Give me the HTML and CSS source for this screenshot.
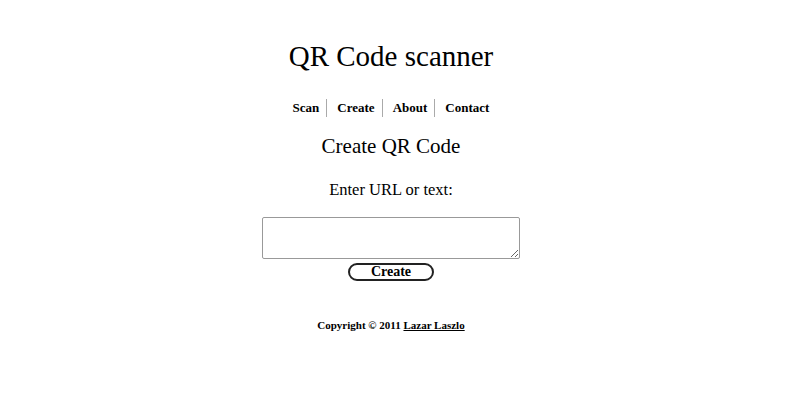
FILE: index.html
```html
<!DOCTYPE html>
<html>
<head>
<meta charset="utf-8">
<title>QR Code scanner</title>
<link rel="stylesheet" href="styles.css">
</head>
<body>
<div class="page">
  <h1 class="title">QR Code scanner</h1>
  <nav class="nav">
    <a class="nav-item first" href="#">Scan</a>
    <a class="nav-item" href="#">Create</a>
    <a class="nav-item" href="#">About</a>
    <a class="nav-item last" href="#">Contact</a>
  </nav>
  <h2 class="section-title">Create QR Code</h2>
  <p class="label">Enter URL or text:</p>
  <form class="form">
    <textarea class="input"></textarea>
    <button type="button" class="btn">Create</button>
  </form>
  <footer class="footer">Copyright © 2011 <a class="author" href="#">Lazar Laszlo</a></footer>
</div>
</body>
</html>
```
FILE: styles.css
```css
html, body {
  margin: 0;
  padding: 0;
  background: #fff;
}
body {
  font-family: "Liberation Serif", "Times New Roman", serif;
  color: #000;
}
.page {
  display: flex;
  flex-direction: column;
  align-items: center;
  padding-top: 37px;
  padding-right: 18px;
}
.title {
  margin: 0;
  font-size: 29px;
  font-weight: normal;
  line-height: 38px;
}
.nav {
  display: flex;
  margin-top: 24px;
  font-weight: bold;
  font-size: 13px;
  line-height: 18px;
}
.nav-item {
  color: #000;
  text-decoration: none;
  padding: 0 7px 0 10px;
  border-right: 1px solid #aaa;
}
.nav-item.first {
  padding-left: 0;
}
.nav-item.last {
  border-right: none;
  padding-right: 0;
}
.section-title {
  margin: 15px 0 0;
  font-size: 21px;
  font-weight: normal;
  line-height: 28px;
}
.label {
  margin: 19px 0 0;
  font-size: 16.5px;
  line-height: 22px;
}
.form {
  display: flex;
  flex-direction: column;
  align-items: center;
  margin-top: 16px;
}
.input {
  width: 258px;
  height: 42px;
  box-sizing: border-box;
  border: 1px solid #999;
  border-radius: 2px;
  margin: 0;
}
.btn {
  margin-top: 4px;
  width: 86px;
  height: 18px;
  box-sizing: border-box;
  border: 2px solid #222;
  border-radius: 9px;
  background: #fff;
  font-family: "Liberation Serif", "Times New Roman", serif;
  font-weight: bold;
  font-size: 14px;
  line-height: 12px;
  padding: 0;
  color: #000;
}
.footer {
  margin-top: 38px;
  font-size: 11px;
  font-weight: bold;
}
.author {
  color: #000;
}
```
